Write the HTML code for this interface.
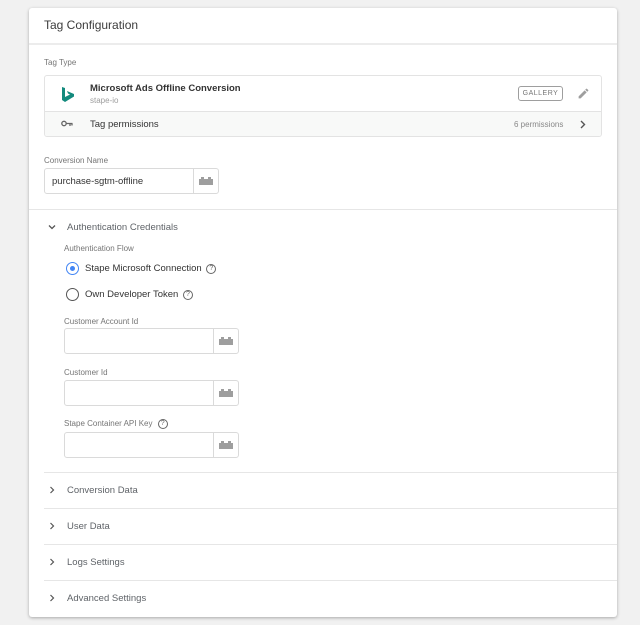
<!DOCTYPE html>
<html><head><meta charset="utf-8"><style>
*{box-sizing:border-box;margin:0;padding:0}
body{width:640px;height:625px;background:#f1f1f1;font-family:"Liberation Sans",Arial,sans-serif;position:relative;overflow:hidden;color:#212121}
.card{position:absolute;left:29px;top:8px;width:588px;height:609px;background:#fff;border-radius:3px;box-shadow:0 1px 3px rgba(0,0,0,.3)}
.a{position:absolute;white-space:nowrap}
.lbl{font-size:8px;color:#757575}
.hl{position:absolute;height:1px;background:#e6e6e6}
.inp{position:absolute;border:1px solid #dadada;border-radius:3px;background:#fff}
.inp .d{position:absolute;top:0;bottom:0;border-left:1px solid #dadada}
.blk{position:absolute;width:14px;height:8px}
.sec{position:absolute;left:38px;font-size:9.5px;color:#5f6368}
.chev{position:absolute;left:19px;width:8px;height:8px}
.q{display:inline-block;width:10px;height:10px;border:1px solid #666;border-radius:50%;font-size:7px;line-height:8px;text-align:center;color:#666;vertical-align:1px;margin-left:2px}
</style></head><body>
<div class="card">
<div class="a" style="left:15px;top:10px;font-size:12px;color:#3c3c3c">Tag Configuration</div>
<div class="hl" style="left:0;right:0;top:35px;background:#ececec;height:2px"></div>
<div class="a lbl" style="left:15px;top:50px">Tag Type</div>
<div style="position:absolute;left:15px;top:67px;width:558px;height:62px;border:1px solid #e3e3e3;border-radius:3px;overflow:hidden">
 <div style="position:absolute;left:0;right:0;top:35px;bottom:0;background:#f8f9f8;border-top:1px solid #e3e3e3"></div>
 <svg style="position:absolute;left:17px;top:11px" width="13" height="15" viewBox="0 0 13 15"><path d="M0 0 L3 1 V10 L8 7.5 L6 6.5 L5 4 L12 7 V9.5 L3 15 L0 13 Z" fill="#138a7d"/></svg>
 <div class="a" style="left:45px;top:7px;font-size:9.5px;font-weight:bold;color:#333">Microsoft Ads Offline Conversion</div>
 <div class="a" style="left:45px;top:20px;font-size:8px;color:#9e9e9e">stape-io</div>
 <div class="a" style="left:473px;top:10px;width:45px;height:15px;border:1px solid #9e9e9e;border-radius:3px;font-size:7px;color:#757575;text-align:center;line-height:13px;letter-spacing:.5px">GALLERY</div>
 <svg style="position:absolute;left:532px;top:11px" width="13" height="13" viewBox="0 0 24 24"><path d="M3 17.25V21h3.75L17.8 9.94l-3.75-3.75L3 17.25zM20.7 7.04a1 1 0 000-1.41l-2.34-2.34a1 1 0 00-1.41 0l-1.83 1.83 3.75 3.75 1.83-1.83z" fill="#9e9e9e"/></svg>
 <svg style="position:absolute;left:16px;top:44px" width="12" height="7" viewBox="0 0 12 7"><circle cx="3" cy="3.5" r="2.2" fill="none" stroke="#666" stroke-width="1.3"/><path d="M5 3.5H11.5M9 3.5V6M11 3.5V5.5" stroke="#666" stroke-width="1.3" fill="none"/></svg>
 <div class="a" style="left:45px;top:43px;font-size:9.5px;color:#333">Tag permissions</div>
 <div class="a" style="left:469px;top:44px;font-size:8px;color:#888">6 permissions</div>
 <svg style="position:absolute;left:535px;top:44px" width="6" height="9" viewBox="0 0 6 9"><path d="M1 1l3.5 3.5L1 8" stroke="#555" stroke-width="1.4" fill="none"/></svg>
</div>
<div class="a lbl" style="left:15px;top:148px">Conversion Name</div>
<div class="inp" style="left:15px;top:160px;width:175px;height:26px"><div class="d" style="left:148px"></div>
 <div class="a" style="left:7px;top:7px;font-size:9.5px;color:#333">purchase-sgtm-offline</div>
 <svg class="blk" style="left:154px;top:8px" viewBox="0 0 14 8"><path d="M0 2h2V0h3v2h4V0h3v2h2v6H0z" fill="#9e9e9e"/></svg></div>
<div class="hl" style="left:0;right:0;top:201px"></div>
<svg class="chev" style="top:215px" viewBox="0 0 8 8"><path d="M1 2.5l3 3 3-3" stroke="#555" stroke-width="1.3" fill="none"/></svg>
<div class="sec" style="top:214px">Authentication Credentials</div>
<div class="a lbl" style="left:35px;top:236px">Authentication Flow</div>
<div style="position:absolute;left:37px;top:254px;width:13px;height:13px;border:1.5px solid #4285f4;border-radius:50%"><div style="position:absolute;left:2.5px;top:2.5px;width:5px;height:5px;background:#4285f4;border-radius:50%"></div></div>
<div class="a" style="left:56px;top:255px;font-size:9.5px;color:#333">Stape Microsoft Connection <span class="q">?</span></div>
<div style="position:absolute;left:37px;top:280px;width:13px;height:13px;border:1.5px solid #555;border-radius:50%"></div>
<div class="a" style="left:56px;top:281px;font-size:9.5px;color:#333">Own Developer Token <span class="q">?</span></div>
<div class="a lbl" style="left:35px;top:309px">Customer Account Id</div>
<div class="inp" style="left:35px;top:320px;width:175px;height:26px"><div class="d" style="left:148px"></div><svg class="blk" style="left:154px;top:8px" viewBox="0 0 14 8"><path d="M0 2h2V0h3v2h4V0h3v2h2v6H0z" fill="#9e9e9e"/></svg></div>
<div class="a lbl" style="left:35px;top:360px">Customer Id</div>
<div class="inp" style="left:35px;top:372px;width:175px;height:26px"><div class="d" style="left:148px"></div><svg class="blk" style="left:154px;top:8px" viewBox="0 0 14 8"><path d="M0 2h2V0h3v2h4V0h3v2h2v6H0z" fill="#9e9e9e"/></svg></div>
<div class="a lbl" style="left:35px;top:411px">Stape Container API Key <span class="q" style="margin-left:3px">?</span></div>
<div class="inp" style="left:35px;top:424px;width:175px;height:26px"><div class="d" style="left:148px"></div><svg class="blk" style="left:154px;top:8px" viewBox="0 0 14 8"><path d="M0 2h2V0h3v2h4V0h3v2h2v6H0z" fill="#9e9e9e"/></svg></div>
<div class="hl" style="left:15px;right:0;top:464px"></div>
<svg class="chev" style="top:478px" viewBox="0 0 8 8"><path d="M2.5 1l3 3-3 3" stroke="#555" stroke-width="1.2" fill="none"/></svg><div class="sec" style="top:477px">Conversion Data</div>
<div class="hl" style="left:15px;right:0;top:500px"></div>
<svg class="chev" style="top:514px" viewBox="0 0 8 8"><path d="M2.5 1l3 3-3 3" stroke="#555" stroke-width="1.2" fill="none"/></svg><div class="sec" style="top:513px">User Data</div>
<div class="hl" style="left:15px;right:0;top:536px"></div>
<svg class="chev" style="top:550px" viewBox="0 0 8 8"><path d="M2.5 1l3 3-3 3" stroke="#555" stroke-width="1.2" fill="none"/></svg><div class="sec" style="top:549px">Logs Settings</div>
<div class="hl" style="left:15px;right:0;top:572px"></div>
<svg class="chev" style="top:586px" viewBox="0 0 8 8"><path d="M2.5 1l3 3-3 3" stroke="#555" stroke-width="1.2" fill="none"/></svg><div class="sec" style="top:585px">Advanced Settings</div>
</div>
</body></html>
